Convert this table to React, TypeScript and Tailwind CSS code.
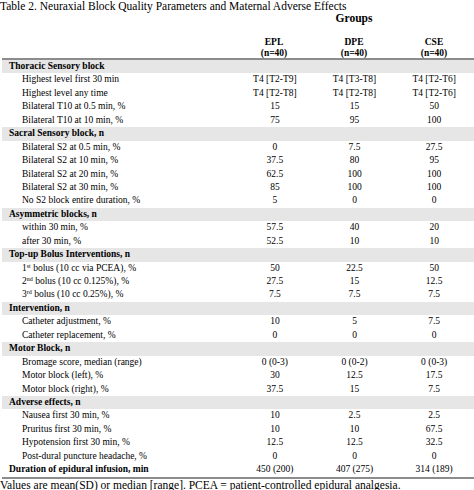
type Row = {
  label: React.ReactNode;
  values?: [string, string, string];
  header?: boolean;
  bold?: boolean;
};

const rows: Row[] = [
  { label: 'Thoracic Sensory block', header: true },
  { label: 'Highest level first 30 min', values: ['T4 [T2-T9]', 'T4 [T3-T8]', 'T4 [T2-T6]'] },
  { label: 'Highest level any time', values: ['T4 [T2-T8]', 'T4 [T2-T8]', 'T4 [T2-T6]'] },
  { label: 'Bilateral T10 at 0.5 min, %', values: ['15', '15', '50'] },
  { label: 'Bilateral T10 at 10 min, %', values: ['75', '95', '100'] },
  { label: 'Sacral Sensory block, n', header: true },
  { label: 'Bilateral S2 at 0.5 min, %', values: ['0', '7.5', '27.5'] },
  { label: 'Bilateral S2 at 10 min, %', values: ['37.5', '80', '95'] },
  { label: 'Bilateral S2 at 20 min, %', values: ['62.5', '100', '100'] },
  { label: 'Bilateral S2 at 30 min, %', values: ['85', '100', '100'] },
  { label: 'No S2 block entire duration, %', values: ['5', '0', '0'] },
  { label: 'Asymmetric blocks, n', header: true },
  { label: 'within 30 min, %', values: ['57.5', '40', '20'] },
  { label: 'after 30 min, %', values: ['52.5', '10', '10'] },
  { label: 'Top-up Bolus Interventions, n', header: true },
  {
    label: (
      <>
        1<sup className="text-[6px]">st</sup> bolus (10 cc via PCEA), %
      </>
    ),
    values: ['50', '22.5', '50'],
  },
  {
    label: (
      <>
        2<sup className="text-[6px]">nd</sup> bolus (10 cc 0.125%), %
      </>
    ),
    values: ['27.5', '15', '12.5'],
  },
  {
    label: (
      <>
        3<sup className="text-[6px]">rd</sup> bolus (10 cc 0.25%), %
      </>
    ),
    values: ['7.5', '7.5', '7.5'],
  },
  { label: 'Intervention, n', header: true },
  { label: 'Catheter adjustment, %', values: ['10', '5', '7.5'] },
  { label: 'Catheter replacement, %', values: ['0', '0', '0'] },
  { label: 'Motor Block, n', header: true },
  { label: 'Bromage score, median (range)', values: ['0 (0-3)', '0 (0-2)', '0 (0-3)'] },
  { label: 'Motor block (left), %', values: ['30', '12.5', '17.5'] },
  { label: 'Motor block (right), %', values: ['37.5', '15', '7.5'] },
  { label: 'Adverse effects, n', header: true },
  { label: 'Nausea first 30 min, %', values: ['10', '2.5', '2.5'] },
  { label: 'Pruritus first 30 min, %', values: ['10', '10', '67.5'] },
  { label: 'Hypotension first 30 min, %', values: ['12.5', '12.5', '32.5'] },
  { label: 'Post-dural puncture headache, %', values: ['0', '0', '0'] },
  { label: 'Duration of epidural infusion, min', values: ['450 (200)', '407 (275)', '314 (189)'], bold: true },
];

function TableRow({ row }: { row: Row }) {
  const shaded = row.header ? 'bg-[#e6e6e6]' : '';
  const labelPad = row.header || row.bold ? 'pl-[7px] font-bold' : 'pl-[20px]';
  return (
    <div className={`flex h-[13.45px] items-center leading-[13.45px] ${shaded}`}>
      <div className={`w-[234px] whitespace-nowrap ${labelPad}`}>{row.label}</div>
      {row.values?.map((v, i) => (
        <div key={i} className="w-[80px] text-center whitespace-nowrap">
          {v}
        </div>
      ))}
    </div>
  );
}

export default function App() {
  return (
    <div
      className="h-[490px] w-[474px] overflow-hidden bg-white text-black"
      style={{ fontFamily: '"Liberation Serif", "Times New Roman", serif' }}
    >
      <div className="h-[13px] whitespace-nowrap text-[11.5px] leading-[13px]">
        Table 2. Neuraxial Block Quality Parameters and Maternal Adverse Effects
      </div>
      <div className="flex h-[11px] text-[11.5px] font-bold leading-[11px]">
        <div className="w-[234px]" />
        <div className="w-[80px]" />
        <div className="w-[80px] text-center">Groups</div>
      </div>
      <div className="h-[13px]" />
      <div className="flex text-[9.5px] font-bold leading-[10.5px]">
        <div className="w-[234px]" />
        {['EPL', 'DPE', 'CSE'].map((g) => (
          <div key={g} className="flex w-[80px] flex-col items-center">
            <span>{g}</span>
            <span>(n=40)</span>
          </div>
        ))}
      </div>
      <div className="ml-[2px] border-t-2 border-b-2 border-[#8c8c8c] text-[9.5px]">
        {rows.map((row, i) => (
          <TableRow key={i} row={row} />
        ))}
      </div>
      <div className="whitespace-nowrap text-[11.5px] leading-[12px]">
        Values are mean(SD) or median [range]. PCEA = patient-controlled epidural analgesia.
      </div>
    </div>
  );
}
